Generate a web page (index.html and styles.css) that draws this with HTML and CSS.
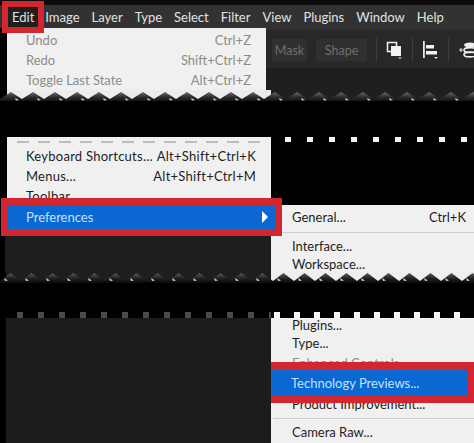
FILE: index.html
```html
<!DOCTYPE html>
<html>
<head>
<meta charset="utf-8">
<link rel="stylesheet" href="styles.css">
</head>
<body>
<div class="screen">
  <div class="topstrip"></div>
  <nav class="menubar">
    <span class="mi edit">Edit</span>
    <span class="mi">Image</span>
    <span class="mi">Layer</span>
    <span class="mi">Type</span>
    <span class="mi">Select</span>
    <span class="mi">Filter</span>
    <span class="mi">View</span>
    <span class="mi">Plugins</span>
    <span class="mi">Window</span>
    <span class="mi">Help</span>
  </nav>

  <div class="sec1">
    <div class="gutter g7"></div>
    <div class="menu drop1">
      <div class="row dis"><span>Undo</span><span>Ctrl+Z</span></div>
      <div class="row dis"><span>Redo</span><span>Shift+Ctrl+Z</span></div>
      <div class="row dis"><span>Toggle Last State</span><span>Alt+Ctrl+Z</span></div>
    </div>
    <div class="panel">
      <div class="optbar">
        <span class="btn mask">Mask</span>
        <span class="btn shape">Shape</span>
        <i class="vsep"></i>
        <svg class="ico" width="17" height="18" viewBox="0 0 17 18">
          <rect x="1.5" y="1.5" width="9" height="9" fill="none" stroke="#e8e8e8" stroke-width="1.6"/>
          <rect x="5" y="5" width="10" height="10" fill="#f2f2f2"/>
          <path d="M12 16.5h4l-2 1.5z" fill="#ddd"/>
        </svg>
        <i class="vsep"></i>
        <svg class="ico" width="17" height="18" viewBox="0 0 17 18">
          <rect x="1" y="0" width="1.8" height="17" fill="#e8e8e8"/>
          <rect x="4" y="4" width="8" height="3.5" fill="#f2f2f2"/>
          <rect x="4" y="10" width="11" height="3.5" fill="#f2f2f2"/>
          <path d="M12 16h4l-2 2z" fill="#ddd"/>
        </svg>
        <i class="vsep"></i>
        <svg class="ico" width="16" height="18" viewBox="0 0 16 18">
          <path d="M1 9h4M3 7v4" stroke="#ddd" stroke-width="1.2"/>
          <ellipse cx="12" cy="4" rx="6" ry="2.4" fill="#eee"/>
          <ellipse cx="12" cy="9" rx="6" ry="2.4" fill="none" stroke="#eee" stroke-width="1.6"/>
          <ellipse cx="12" cy="13.5" rx="6" ry="2.4" fill="none" stroke="#eee" stroke-width="1.6"/>
        </svg>
      </div>
      <div class="panelbody"></div>
    </div>
  </div>

  <div class="torn torn1">
    <svg width="474" height="14" viewBox="0 0 474 14">
      <defs>
        <linearGradient id="mg1" x1="0" y1="0" x2="0" y2="1">
          <stop offset="0" stop-color="#6a6a6a"/>
          <stop offset="0.45" stop-color="#2a2a2a"/>
          <stop offset="1" stop-color="#000"/>
        </linearGradient>
        <pattern id="mp1" width="22" height="14" patternUnits="userSpaceOnUse">
          <path d="M0 9 L11 2 L22 9 V14 H0Z" fill="url(#mg1)"/>
          <path d="M15 8 L19 10 L16 10.5Z" fill="#d8d8d8"/>
        </pattern>
      </defs>
      <rect width="474" height="14" fill="url(#mp1)"/>
      <rect y="11" width="474" height="3" fill="#000"/>
    </svg>
  </div>
  <div class="band1"><div class="dots1"></div></div>

  <div class="sec2">
    <div class="colleft">
      <div class="menu drop2">
        <div class="dash"></div>
        <div class="row"><span>Keyboard Shortcuts...</span><span>Alt+Shift+Ctrl+K</span></div>
        <div class="row"><span>Menus...</span><span>Alt+Shift+Ctrl+M</span></div>
        <div class="row short"><span>Toolbar</span><span></span></div>
        <div class="row hl pref"><span>Preferences</span><span class="arrow"></span></div>
      </div>
      <div class="darkfill"></div>
    </div>
    <div class="colright">
      <div class="blackgap"></div>
      <div class="menu sub1">
        <div class="row gen"><span>General...</span><span>Ctrl+K</span></div>
        <div class="hsep"></div>
        <div class="row iface"><span>Interface...</span><span></span></div>
        <div class="row wspace"><span>Workspace...</span><span></span></div>
      </div>
    </div>
  </div>

  <div class="torn torn2">
    <svg width="474" height="13" viewBox="0 0 474 13">
      <defs>
        <linearGradient id="mg2" x1="0" y1="0" x2="0" y2="1">
          <stop offset="0" stop-color="#5a5a5a"/>
          <stop offset="0.5" stop-color="#1c1c1c"/>
          <stop offset="1" stop-color="#000"/>
        </linearGradient>
        <pattern id="mp2" width="21" height="13" patternUnits="userSpaceOnUse">
          <path d="M0 9 L10.5 1 L21 9 V13 H0Z" fill="url(#mg2)"/>
          <path d="M4 6 L8 8.5 L5 9Z" fill="#cfcfcf"/>
        </pattern>
      </defs>
      <rect width="474" height="13" fill="url(#mp2)"/>
      <rect y="11" width="474" height="2" fill="#000"/>
    </svg>
  </div>
  <div class="band2"><div class="dots2"></div></div>

  <div class="sec3">
    <div class="gutter g6"></div>
    <div class="darkfill2"></div>
    <div class="menu sub2">
      <div class="row plug"><span>Plugins...</span><span></span></div>
      <div class="row"><span>Type...</span><span></span></div>
      <div class="row enh"><span>Enhanced Controls</span><span></span></div>
      <div class="row hl tech"><span>Technology Previews...</span><span></span></div>
      <div class="row prod"><span>Product Improvement...</span><span></span></div>
      <div class="hsep"></div>
      <div class="row"><span>Camera Raw...</span><span></span></div>
    </div>
  </div>
</div>
</body>
</html>
```

FILE: styles.css
```css
* { box-sizing: border-box; }
html, body { margin: 0; padding: 0; background: #000; }
body {
  font-family: Lato, "Open Sans", "Liberation Sans", sans-serif;
  font-size: 13px;
}
.screen {
  width: 474px;
  height: 443px;
  overflow: hidden;
  background: #000;
  display: flex;
  flex-direction: column;
}
.topstrip { height: 5px; flex: none; background: #0c0c0c; }

.menubar {
  height: 23px;
  flex: none;
  background: #323232;
  display: flex;
  align-items: center;
  padding-left: 12px;
  gap: 12px;
  color: #e2e2e2;
  font-size: 13px;
  position: relative;
  z-index: 3;
}
.mi { line-height: 20px; }
.edit {
  background: #1f1f1f;
  margin-left: -4px;
  margin-right: -5px;
  padding: 0 4px;
  box-shadow: 0 0 0 6px #d3262f;
}

.sec1 { height: 62px; flex: none; display: flex; }
.gutter { flex: none; background: #000; }
.g7 { width: 7px; }
.g6 { width: 6px; }

.menu { background: #f0f0f0; color: #1e1e1e; }
.row {
  display: flex;
  justify-content: space-between;
  align-items: center;
  height: 20px;
  padding: 0 15px 0 19px;
  white-space: nowrap;
}
.dis { color: #8c8c8c; }
.drop1 { width: 264px; padding-top: 2px; }

.panel { flex: 1; display: flex; flex-direction: column; }
.optbar {
  height: 40px;
  background: #282828;
  border-top: 2px solid #303030;
  display: flex;
  align-items: center;
  padding-left: 6px;
}
.btn {
  height: 22px;
  display: flex;
  align-items: center;
  justify-content: center;
  background: #303030;
  color: #6e6e6e;
  font-size: 12.5px;
  margin-top: 2px;
}
.mask { width: 35px; }
.shape { width: 51px; margin-left: 9px; }
.vsep { width: 1px; height: 24px; background: #3c3c3c; margin: 2px 9px 0 9px; }
.ico { flex: none; margin-top: 2px; }
.panelbody { flex: 1; background: #1f1f1f; }

.torn { flex: none; position: relative; }
.torn svg { display: block; }
.torn1 {
  height: 14px;
  background: linear-gradient(to right, #000 0 7px, #ececec 7px 271px, #1f1f1f 271px);
}
.torn2 {
  height: 13px;
  background: linear-gradient(to right, #000 0 6px, #1e1e1e 6px 271px, #eeeeee 271px);
}
.band1 { height: 33px; flex: none; background: #000; position: relative; }
.dots1 {
  position: absolute;
  left: 285px;
  right: 0;
  bottom: -5px;
  height: 5px;
  z-index: 2;
  background: repeating-linear-gradient(to right, #f4f4f4 0 6px, transparent 6px 22px);
}
.band2 { height: 33px; flex: none; background: #000; display: flex; flex-direction: column; justify-content: flex-end; }
.dots2 {
  height: 6px;
  background:
    repeating-linear-gradient(to right, #4a4a4a 0 6px, transparent 6px 21px) 17px 0 / 254px 6px no-repeat,
    repeating-linear-gradient(to right, #f4f4f4 0 6px, transparent 6px 20px) 274px 0 / 200px 6px no-repeat;
}

.sec2 { height: 135px; flex: none; display: flex; }
.colleft { width: 271px; flex: none; display: flex; flex-direction: column; }
.drop2 { margin-left: 7px; padding-top: 4px; }
.drop2 .row { letter-spacing: 0.25px; }
.dash {
  height: 2px;
  margin: 0 10px 3px 10px;
  background: repeating-linear-gradient(to right, #bdbdbd 0 12px, transparent 12px 21px);
}
.short { height: 19px; }
.hl { background: #0b67d1; color: #bfe3ff; }
.drop2 .pref {
  height: 24px;
  margin: 0 -4px 0 1px;
  padding: 0 7px 0 18px;
  letter-spacing: 0;
  position: relative;
  z-index: 2;
  box-shadow: 0 0 0 7px #d3262f;
}
.arrow {
  width: 0;
  height: 0;
  border-top: 6px solid transparent;
  border-bottom: 6px solid transparent;
  border-left: 6px solid #ffffff;
}
.darkfill { flex: 1; margin-left: 5px; background: #1e1e1e; }

.colright { flex: 1; display: flex; flex-direction: column; }
.blackgap { height: 68px; flex: none; background: #000; }
.sub1 { flex: 1; overflow: hidden; }
.sub1 .row, .sub2 .row { padding-left: 21px; padding-right: 8px; }
.gen { height: 24px; }
.iface { height: 19px; }
.wspace { height: 19px; align-items: flex-start; padding-top: 1px; }
.hsep { height: 1px; background: #cfcfcf; margin: 3px 0 3px 2px; }

.sec3 { flex: 1; display: flex; min-height: 0; }
.darkfill2 { width: 265px; flex: none; background: #1c1c1c; }
.sub2 { flex: 1; overflow: hidden; }
.sub2 .plug { margin-top: -2px; height: 17px; }
.enh { height: 17px; color: #8e8e8e; align-items: flex-end; line-height: 13px; }
.sub2 .tech {
  height: 25px;
  margin: 0 7px 0 1px;
  padding-left: 19px;
  position: relative;
  z-index: 2;
  box-shadow: 0 0 0 8px #d3262f;
}
.prod { height: 18px; }
.sub2 .hsep { margin: 5px 0 3px 2px; }
```
